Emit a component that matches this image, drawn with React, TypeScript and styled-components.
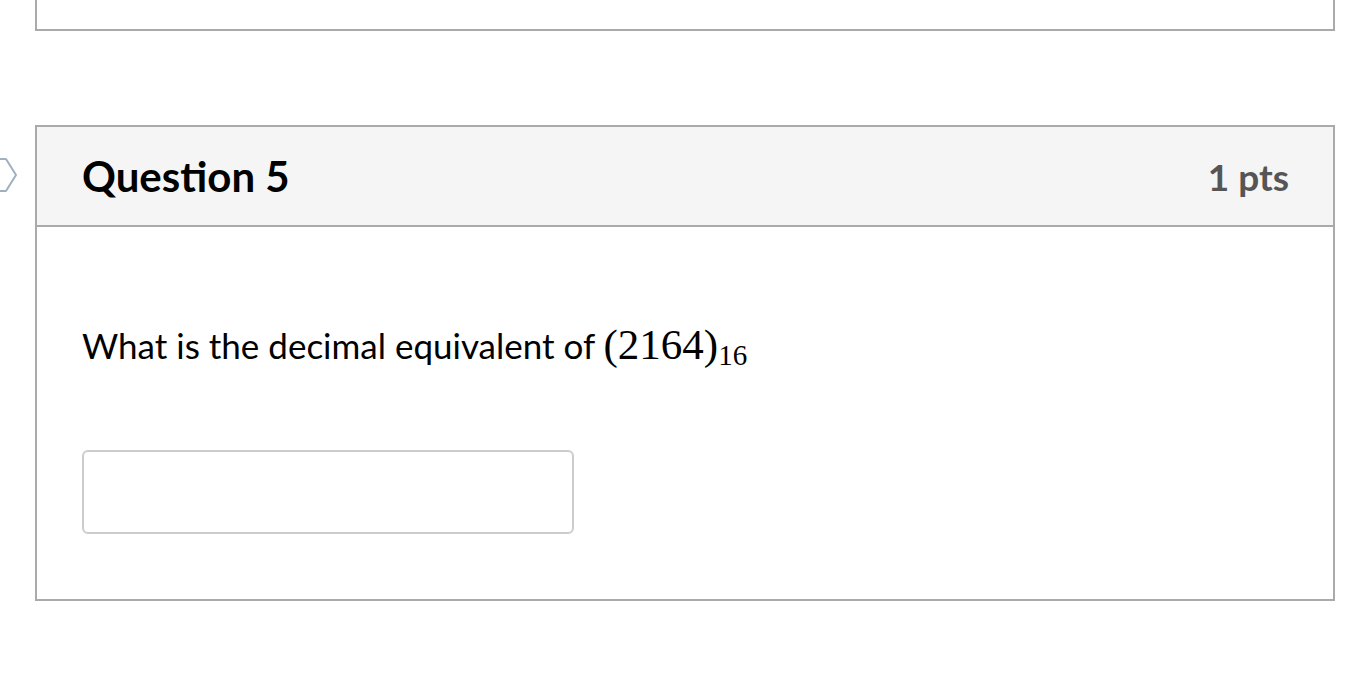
import React from "react";
import styled, { createGlobalStyle } from "styled-components";

const Global = createGlobalStyle`
  html, body { margin: 0; padding: 0; background: #fff; }
  body { font-family: Lato, "Open Sans", sans-serif; color: #000; }
`;

const Page = styled.div`
  position: relative;
  width: 1356px;
  height: 680px;
  overflow: hidden;
  padding: 0 21px 0 35px;
  box-sizing: border-box;
  display: flex;
  flex-direction: column;
`;

const PrevCard = styled.div`
  height: 29px;
  border: 2px solid #aaa;
  border-top: none;
  flex-shrink: 0;
`;

const Card = styled.section`
  margin-top: 94px;
  border: 2px solid #aaa;
  display: flex;
  flex-direction: column;
`;

const Header = styled.header`
  height: 98px;
  background: #f5f5f5;
  border-bottom: 2px solid #aaa;
  display: flex;
  align-items: center;
  justify-content: space-between;
  padding: 0 44px 0 45px;
`;

const Title = styled.h2`
  margin: 0;
  font-family: Lato, sans-serif;
  font-weight: 700;
  font-size: 42px;
  color: #000;
`;

const Points = styled.div`
  font-family: Lato, sans-serif;
  font-weight: 700;
  font-size: 37px;
  color: #555;
`;

const Body = styled.div`
  height: 372px;
  box-sizing: border-box;
  padding: 98px 45px 0;
`;

const Prompt = styled.p`
  margin: 0;
  height: 40px;
  font-family: Lato, sans-serif;
  font-size: 35px;
  color: #000;
  line-height: 40px;
  white-space: nowrap;
`;

const MathMain = styled.span`
  font-family: "Liberation Serif", "DejaVu Serif", serif;
  font-size: 43px;
  line-height: 0;
`;

const MathSub = styled.sub`
  font-family: "Liberation Serif", "DejaVu Serif", serif;
  font-size: 29px;
  vertical-align: -6px;
  line-height: 0;
`;

const Answer = styled.input`
  display: block;
  margin-top: 85px;
  width: 492px;
  height: 84px;
  box-sizing: border-box;
  border: 2px solid #ccc;
  border-radius: 6px;
  background: #fff;
  outline: none;
`;

const Flag = styled.svg`
  position: absolute;
  left: -14px;
  top: 155px;
`;

export default function App() {
  return (
    <Page>
      <Global />
      <Flag width="34" height="40" viewBox="0 0 34 40">
        <path d="M2 4 H20 L30 20 L20 36 H2 Z" fill="#fff" stroke="#9fb0c0" strokeWidth="2" strokeLinejoin="round" />
      </Flag>
      <PrevCard />
      <Card>
        <Header>
          <Title>Question 5</Title>
          <Points>1 pts</Points>
        </Header>
        <Body>
          <Prompt>
            What is the decimal equivalent of <MathMain>(2164)</MathMain>
            <MathSub>16</MathSub>
          </Prompt>
          <Answer type="text" aria-label="answer" />
        </Body>
      </Card>
    </Page>
  );
}
